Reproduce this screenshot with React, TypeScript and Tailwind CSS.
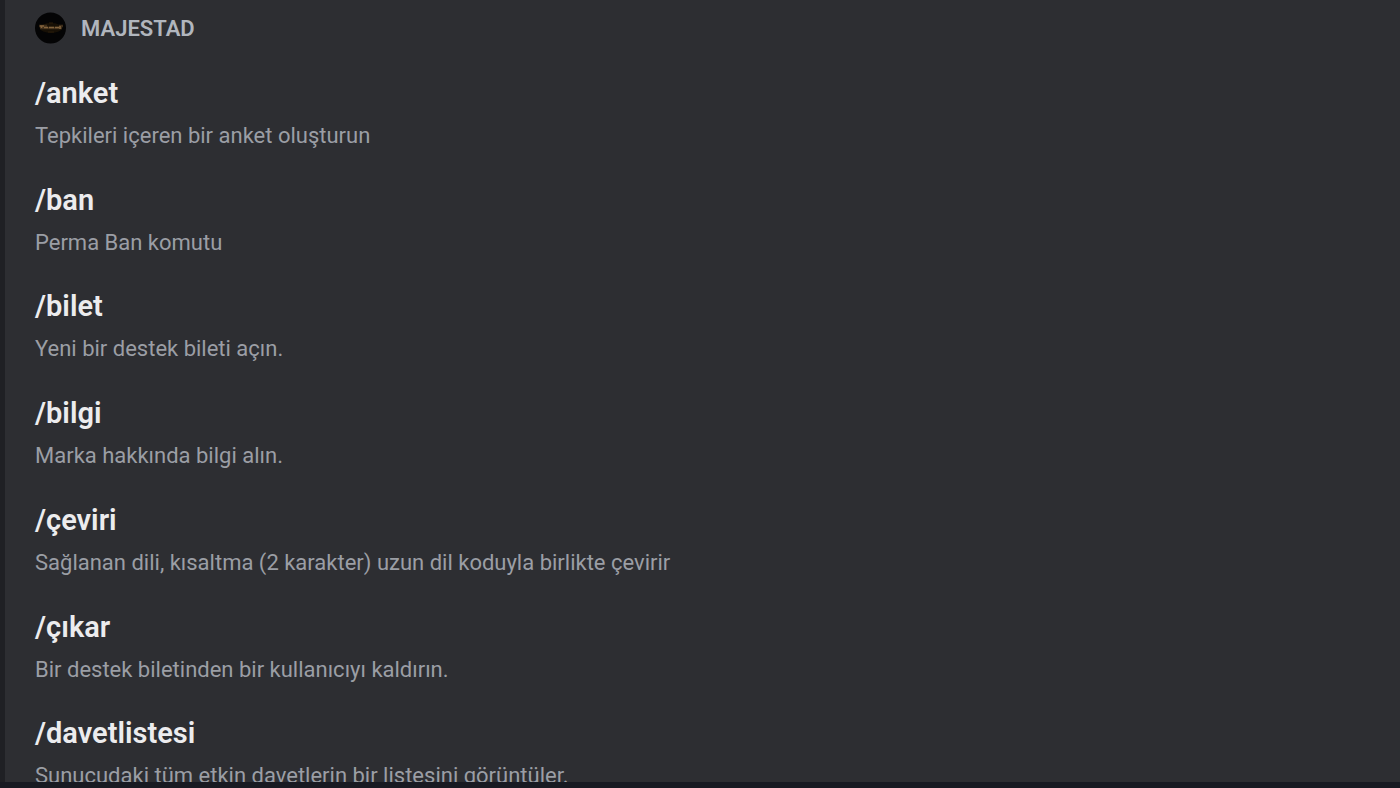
const COMMANDS = [
  { name: "anket", description: "Tepkileri içeren bir anket oluşturun" },
  { name: "ban", description: "Perma Ban komutu" },
  { name: "bilet", description: "Yeni bir destek bileti açın." },
  { name: "bilgi", description: "Marka hakkında bilgi alın." },
  {
    name: "çeviri",
    description:
      "Sağlanan dili, kısaltma (2 karakter) uzun dil koduyla birlikte çevirir",
  },
  {
    name: "çıkar",
    description: "Bir destek biletinden bir kullanıcıyı kaldırın.",
  },
  {
    name: "davetlistesi",
    description: "Sunucudaki tüm etkin davetlerin bir listesini görüntüler.",
  },
];

function BotAvatar() {
  return (
    <svg viewBox="0 0 32 32" className="size-8 shrink-0" aria-hidden="true">
      <circle cx="15.5" cy="16" r="15.5" fill="#040405" />
      <ellipse cx="16" cy="16" rx="11" ry="5" fill="#171006" />
      <path d="M4 14h8M5 16h22M24 14h4" stroke="#3d2d1a" strokeWidth="2.5" />
      <path d="M5 14h4M6.5 14v2M9 15.5h4M14 15.5h5M20 15.5h4M25 14v3" stroke="#82633d" strokeWidth="1.6" fill="none" />
      <path d="M14 11h4M13 20h6" stroke="#2b1d0b" strokeWidth="1" />
    </svg>
  );
}

export default function App() {
  return (
    <div className="flex h-screen flex-col overflow-hidden border-b-6 border-[#181a22] bg-[#2d2e32] font-[Roboto,sans-serif]">
      <main className="min-h-0 flex-1 overflow-hidden border-l-5 border-[#1f2024] pt-3 pl-[30px]">
        <header className="flex h-8 items-center gap-3.5">
          <BotAvatar />
          <h2 className="text-[22px] font-semibold text-[#b1b6be]">MAJESTAD</h2>
        </header>

        <ul className="mt-[29px] grid h-[747px] grid-rows-7">
          {COMMANDS.map((command) => (
            <li key={command.name} className="whitespace-nowrap">
              <h3 className="text-[29px] leading-10 font-semibold text-[#ececee]">
                /{command.name}
              </h3>
              <p className="mt-[3px] text-[22px] leading-10 text-[#9b9ea5]">
                {command.description}
              </p>
            </li>
          ))}
        </ul>
      </main>
    </div>
  );
}
